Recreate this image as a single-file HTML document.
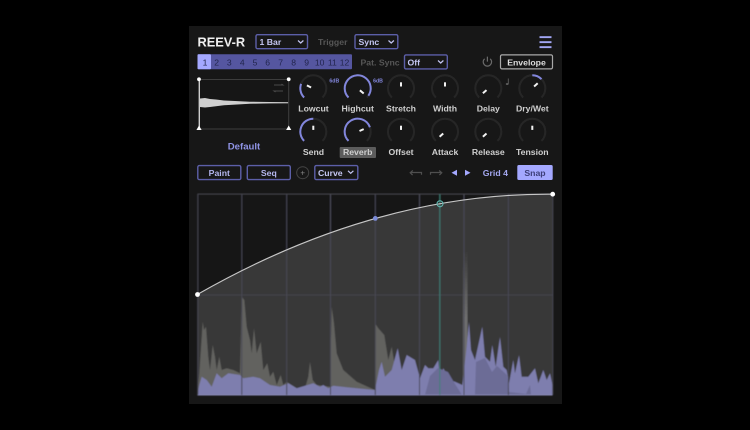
<!DOCTYPE html>
<html><head><meta charset="utf-8"><style>
html,body{margin:0;padding:0;background:#000;width:750px;height:430px;overflow:hidden}
svg{display:block}
text{font-family:"Liberation Sans",sans-serif}
.l{font-size:8.7px;font-weight:700;fill:#cfcfcf;text-anchor:middle}
.b{fill:none;stroke:#5c5ea8;stroke-width:1.4}
.t{fill:#b4b6ee;font-size:8.7px;font-weight:700;text-anchor:middle}
.s{fill:#c4c6f2;font-size:8.7px;font-weight:700}
.n{fill:#23254e;font-size:8.6px;text-anchor:middle}
.c{fill:none;stroke:#c4c6f2;stroke-width:1.2}
.k{fill:none;stroke:#282828;stroke-width:2}
.a{fill:none;stroke:#8286dc;stroke-width:2}
.p{stroke:#f2f2f2;stroke-width:2}
</style></head><body>
<svg width="750" height="430" viewBox="0 0 750 430" xmlns="http://www.w3.org/2000/svg">
<defs>
<filter id="soft" x="-5%" y="-5%" width="110%" height="110%"><feGaussianBlur stdDeviation="0.35"/></filter>
<filter id="soft2" x="-5%" y="-5%" width="110%" height="110%"><feGaussianBlur stdDeviation="0.6"/></filter>
<linearGradient id="col" x1="0" y1="0" x2="0" y2="1"><stop offset="0" stop-color="#777" stop-opacity="0"/><stop offset=".5" stop-color="#6e6e6e"/><stop offset="1" stop-color="#6e6e6e"/></linearGradient>
<path id="tr" d="M-9.19 9.19A13 13 0 1 1 9.19 9.19"/>
</defs>
<rect x="189" y="26" width="373" height="378" fill="#171717"/>
<g filter="url(#soft)">
<text x="197.5" y="46.5" font-size="12.8" font-weight="700" fill="#f0f0f0">REEV-R</text>
<rect class="b" x="256" y="34.7" width="51.5" height="14" rx="1.5"/>
<text class="s" x="259.5" y="45">1 Bar</text><path class="c" d="M298 40.5l2.7 2.5 2.7-2.5"/>
<text x="318" y="45" font-size="8.7" fill="#575757" font-weight="700">Trigger</text>
<rect class="b" x="355" y="34.7" width="42.8" height="14" rx="1.5"/>
<text class="s" x="358.5" y="45">Sync</text><path class="c" d="M388.5 40.5l2.7 2.5 2.7-2.5"/>
<g fill="#a2a6f4"><rect x="539.5" y="36.2" width="12" height="1.9"/><rect x="539.5" y="41.2" width="12" height="1.9"/><rect x="539.5" y="46.2" width="12" height="1.9"/></g>

<rect x="197.5" y="54.3" width="154.5" height="15" fill="#5456a0" rx="1"/>
<rect x="197.5" y="54.3" width="13.5" height="15" fill="#a4a8ff" rx="1"/>
<text class="n" x="205" y="65.3">1</text><text class="n" x="216.7" y="65.3">2</text><text class="n" x="229.3" y="65.3">3</text><text class="n" x="242.3" y="65.3">4</text><text class="n" x="255" y="65.3">5</text><text class="n" x="267.7" y="65.3">6</text><text class="n" x="280.7" y="65.3">7</text><text class="n" x="293.7" y="65.3">8</text><text class="n" x="306.7" y="65.3">9</text><text class="n" x="319.7" y="65.3">10</text><text class="n" x="332.3" y="65.3">11</text><text class="n" x="344.5" y="65.3">12</text>
<text x="360.5" y="65.3" font-size="8.7" fill="#575757" font-weight="700">Pat. Sync</text>
<rect class="b" x="404.5" y="54.9" width="42.8" height="14" rx="1.5"/>
<text class="s" x="407.5" y="65.3">Off</text><path class="c" d="M438 60.5l2.7 2.5 2.7-2.5"/>
<path d="M484.6 58.8a4.2 4.2 0 1 0 5.6 0M487.4 56.6v5" fill="none" stroke="#6a6a6a" stroke-width="1.2"/>
<rect x="500.5" y="54.9" width="52" height="14" rx="1.5" fill="none" stroke="#a8a8a8" stroke-width="1.2"/>
<text x="526.5" y="65.3" font-size="8.7" font-weight="700" fill="#dedede" text-anchor="middle">Envelope</text>

<!-- waveform box -->
<rect x="199" y="79.5" width="89.7" height="49.5" fill="#141414" stroke="#3e3e3e" stroke-width="1"/>
<path d="M199.5 102.7h89" stroke="#5a5a5a" stroke-width="1"/>
<path fill="#cfcfcf" d="M200 98.5L205 98L210 99L216 99.5L224 100.5L235 101L250 101.7L270 102L288 102.2V103.2L270 103.4L250 103.8L235 104.6L224 105.2L216 106.2L210 107L205 107.5L200 107Z"/>
<path d="M199.3 80v49" stroke="#d8d8d8" stroke-width="1.3"/>
<circle cx="199" cy="79.3" r="1.9" fill="#fff"/><circle cx="288.7" cy="79.3" r="1.9" fill="#fff"/>
<path d="M199 125.5l2.6 4.5h-5.2zM288.7 125.5l2.6 4.5h-5.2z" fill="#fff"/>
<path d="M274 85h9l-1.5-1M283 91h-9l1.5 1" fill="none" stroke="#4c4c4c" stroke-width="1"/>
<text x="244" y="149.3" font-size="9.6" font-weight="700" fill="#9094e6" text-anchor="middle">Default</text>

<!-- knobs -->
<g transform="translate(313.3 88.3)"><use href="#tr" class="k"/><path class="a" d="M-9.19 9.19A13 13 0 0 1 -12.2 -4.45"/><line class="p" x1="-2.2" y1="-.8" x2="-6.4" y2="-2.9"/></g>
<g transform="translate(357.7 88.3)"><use href="#tr" class="k"/><path class="a" d="M-9.19 9.19A13 13 0 1 1 10.65 7.46"/><line class="p" x1="2.2" y1="2" x2="6" y2="5.2"/></g>
<g transform="translate(401 88.3)"><use href="#tr" class="k"/><line class="p" x1="0" y1="-1.8" x2="0" y2="-6"/></g>
<g transform="translate(445 88.3)"><use href="#tr" class="k"/><line class="p" x1="0" y1="-1.8" x2="0" y2="-6"/></g>
<g transform="translate(488.3 88.3)"><use href="#tr" class="k"/><line class="p" x1="-1.8" y1="1.8" x2="-5.4" y2="5"/></g>
<g transform="translate(532.3 88.3)"><use href="#tr" class="k"/><path class="a" d="M0 -13A13 13 0 0 1 9.19 -9.19"/><line class="p" x1="1.8" y1="-1.8" x2="5.4" y2="-5"/></g>
<g transform="translate(313.3 131.7)"><use href="#tr" class="k"/><path class="a" d="M-9.19 9.19A13 13 0 0 1 0 -13"/><line class="p" x1="0" y1="-1.8" x2="0" y2="-6"/></g>
<g transform="translate(357.7 131.7)"><use href="#tr" class="k"/><path class="a" d="M-9.19 9.19A13 13 0 1 1 12.2 -4.45"/><line class="p" x1="1.8" y1="-.7" x2="6" y2="-2.6"/></g>
<g transform="translate(401 131.7)"><use href="#tr" class="k"/><line class="p" x1="0" y1="-1.8" x2="0" y2="-6"/></g>
<g transform="translate(445 131.7)"><use href="#tr" class="k"/><line class="p" x1="-1.8" y1="1.8" x2="-5.4" y2="5"/></g>
<g transform="translate(488.3 131.7)"><use href="#tr" class="k"/><line class="p" x1="-1.8" y1="1.8" x2="-5.4" y2="5"/></g>
<g transform="translate(532.3 131.7)"><use href="#tr" class="k"/><line class="p" x1="0" y1="-1.8" x2="0" y2="-6"/></g>
<text x="334.3" y="82.7" font-size="5.2" font-weight="700" fill="#8286dc" text-anchor="middle">6dB</text>
<text x="378" y="82.7" font-size="5.2" font-weight="700" fill="#8286dc" text-anchor="middle">6dB</text>
<path d="M508.3 84V78.5" stroke="#5c5c5c" stroke-width=".9"/><ellipse cx="507.2" cy="84" rx="1.4" ry="1" fill="#5c5c5c"/>
<rect x="339.7" y="147" width="36.3" height="11" rx="1" fill="#5c5c5c"/>
<text class="l" x="313.5" y="111.3">Lowcut</text><text class="l" x="357.7" y="111.3">Highcut</text><text class="l" x="401" y="111.3">Stretch</text><text class="l" x="445" y="111.3">Width</text><text class="l" x="488.3" y="111.3">Delay</text><text class="l" x="532.3" y="111.3">Dry/Wet</text>
<text class="l" x="313.5" y="155.2">Send</text><text class="l" x="357.7" y="155.2">Reverb</text><text class="l" x="401" y="155.2">Offset</text><text class="l" x="445" y="155.2">Attack</text><text class="l" x="488.3" y="155.2">Release</text><text class="l" x="532.3" y="155.2">Tension</text>

<!-- row 3 -->
<rect class="b" x="197.8" y="165.6" width="43" height="14" rx="1.5"/><text class="t" x="219.3" y="176">Paint</text>
<rect class="b" x="247.3" y="165.6" width="43" height="14" rx="1.5"/><text class="t" x="268.8" y="176">Seq</text>
<circle cx="302.7" cy="172.7" r="6" fill="none" stroke="#444" stroke-width="1"/><text x="302.7" y="175.5" font-size="8" fill="#888" text-anchor="middle">+</text>
<rect class="b" x="314.8" y="165.6" width="43" height="14" rx="1.5"/><text class="s" x="318" y="176">Curve</text><path class="c" d="M348 170.8l2.7 2.5 2.7-2.5"/>
<path d="M422 172.5h-11.5M412.8 170.4l-2.6 2.4 2.4 2.2M415 172.5h6.5v2.2" fill="none" stroke="#4f4f4f" stroke-width="1.2"/>
<path d="M430 172.5h11.5M439.2 170.4l2.6 2.4-2.4 2.2M437 172.5h-6.5v2.2" fill="none" stroke="#4f4f4f" stroke-width="1.2"/>
<path d="M457 169.7v6l-5.5-3zM465 169.7v6l5.5-3z" fill="#a4a8ff"/>
<text x="482.8" y="176" font-size="8.7" font-weight="700" fill="#a4a8f0">Grid 4</text>
<rect x="517.3" y="165" width="35.4" height="15" rx="1.5" fill="#a4a8ff"/><text x="535" y="176" font-size="8.7" font-weight="700" fill="#3c3e78" text-anchor="middle">Snap</text>
</g>

<!-- graph -->
<g filter="url(#soft2)">
<rect x="197.5" y="194" width="355.5" height="201" fill="#141414"/>
<path fill="#383838" d="M197.3 294.5Q375 192.8 552.7 194.2V395H197.3Z"/>
<path d="M197.5 194h355M197.5 295h355" stroke="#45454c" stroke-width="1"/>
<!-- gray peaks -->
<path fill="#62625f" d="M197.3 395L199.3 373.3L202.7 321.7L204 330L206 326.7L208.3 356.7L210 370L212.7 345L215 356.7L216.7 370L219.3 356.7L221.7 370L226.7 368.3L233.3 370L240 373.3L241.7 296.7L244.3 300L246.7 326.7L250 340L251.7 353.3L254 328.3L256.7 353.3L260.7 341.7L263.3 370L267.3 363.3L270 376.7L273.3 371.7L276.7 385L280.7 375L283.3 385L286.7 381.7L296.7 388.3L305 388.3L308.3 376.7L310 361.7L312.7 380L316.7 385L330 386.7L331.7 306.7L334 323.3L336.7 353.3L339.3 360L343.3 370L356.7 381.7L375 390L375 323.3L378.3 328.3L384.3 335L388.3 360L391.7 346.7L395 366.7L405 385V395Z"/>
<rect x="463" y="250" width="4.5" height="135" fill="url(#col)"/>
<!-- purple -->
<path fill="#7e7eae" d="M197.3 395L199.3 385L201.7 376.7L206.7 380L211.7 386.7L216.7 373.3L221.7 378.3L228.3 373.3L240 375L243.3 378.3L253.3 376.7L260 378.3L270 385L280 386.7L288.3 383.3L296.7 388.3L313.3 383.3L320 386.7L323.3 385L328.3 388.3L333.3 385.7L346.7 387.3L375 390L379 370L381.7 361.7L385 376.7L391.7 370L397.7 348.3L401.7 370L406.7 355L415 360L420 378.3L425 365L428.3 368.3L433.3 368.3L438.3 360L440 380L443.3 368.3L450 380L455 381.7L462.3 385L466.7 346.7L469 321.7L471 350L475 360L482.3 326.7L485 356.7L490 361.7L492.3 345L495.7 366.7L500 336.7L503.3 366.7L506.7 370L509 383.3L513.3 360L515 373.3L519 355L521.7 376.7L528.3 376.7L535 368.3L538.3 383.3L543.3 370L546.7 380L550 373.3L552.5 385V395Z"/>
<path fill="#6c6c96" d="M425 395L430 376L438 368L448 372L455 384L462 395ZM475 395L476 362L485 358L492 372L497 366L507 375L509 392L526 394L530 385L531 395Z"/>
<path d="M197.5 395h355" stroke="#8a8ab8" stroke-width="1"/>
<path stroke="#484856" stroke-width="1" d="M197.8 194v201M241.8 194v201M286.7 194v201M330.5 194v201M375.3 194v201M419.5 194v201M464 194v201M508.4 194v201M552.8 194v201"/>
<path d="M439.8 194v201" stroke="#3f8078" stroke-width="1"/>
</g>
<g filter="url(#soft)">
<path fill="none" stroke="#c6c6c6" stroke-width="1.2" d="M197.3 294.5Q375 192.8 552.7 194.2"/>
<circle cx="375.3" cy="218.4" r="2.4" fill="#7c8cd8"/>
<circle cx="440" cy="203.8" r="3" fill="none" stroke="#5fb5ae" stroke-width="1.1"/>
<circle cx="197.5" cy="294.5" r="2.4" fill="#fff"/><circle cx="552.7" cy="194.2" r="2.4" fill="#fff"/>
</g>
</svg>
</body></html>
